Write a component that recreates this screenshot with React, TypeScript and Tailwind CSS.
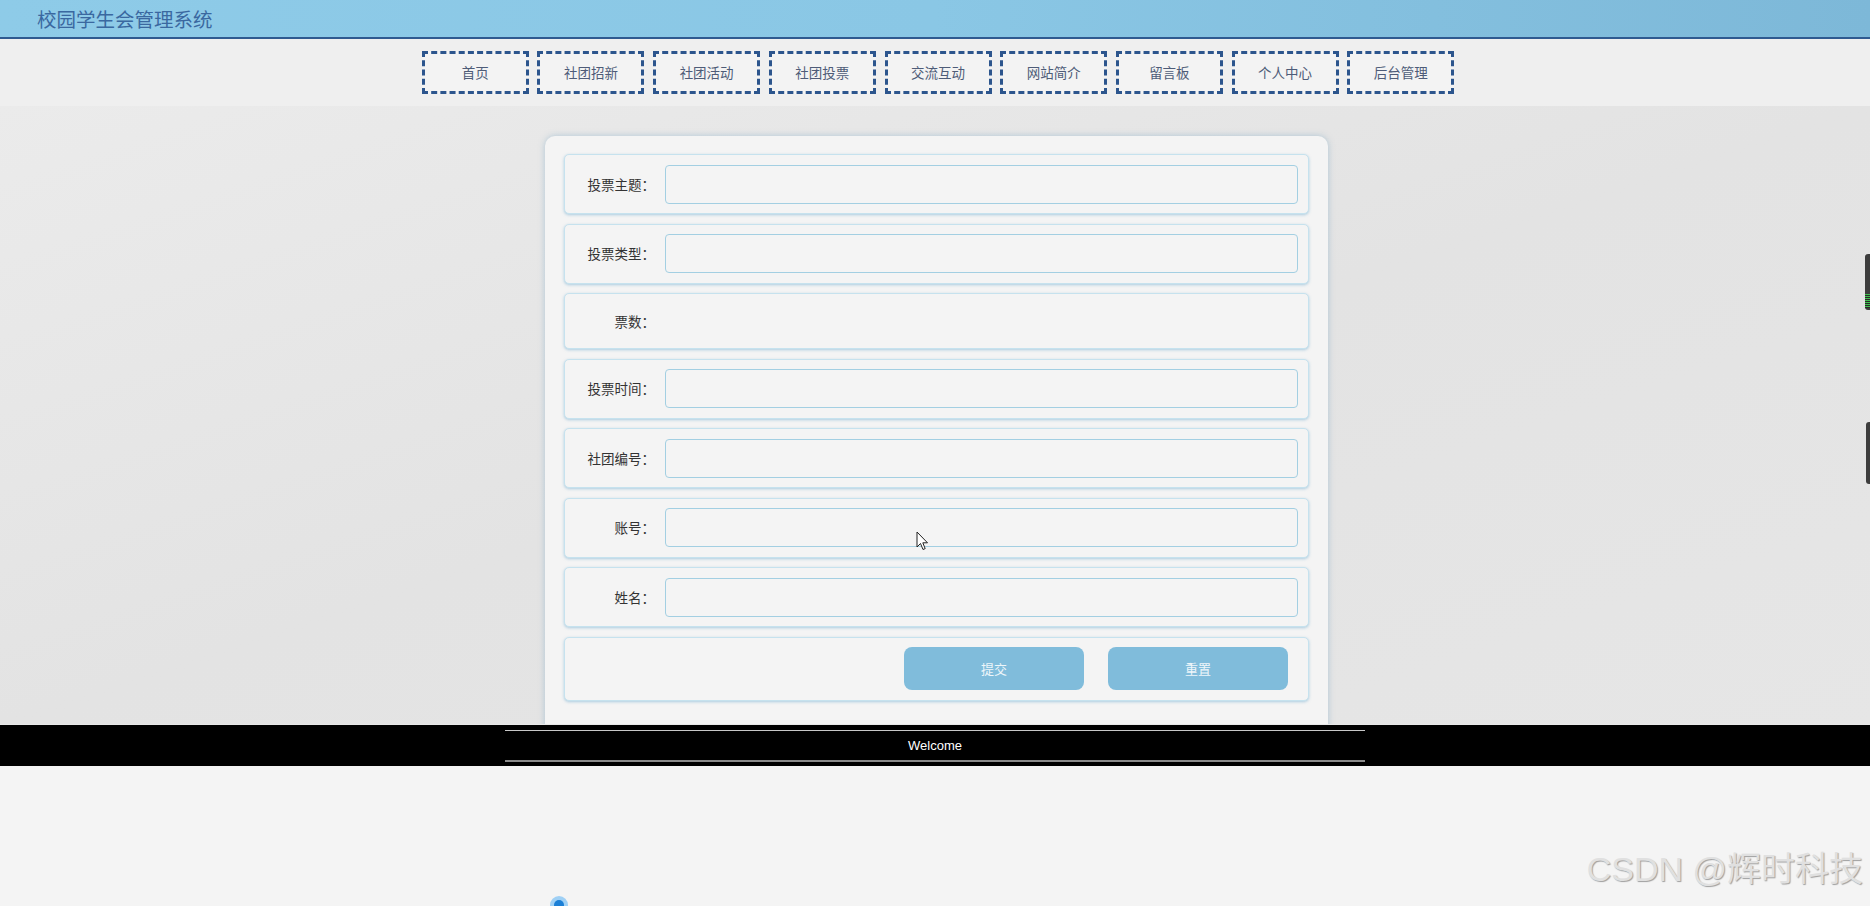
const navItems = ["首页", "社团招新", "社团活动", "社团投票", "交流互动", "网站简介", "留言板", "个人中心", "后台管理"];

type Field = { label: string; input: boolean };

const fields: Field[] = [
  { label: "投票主题：", input: true },
  { label: "投票类型：", input: true },
  { label: "票数：", input: false },
  { label: "投票时间：", input: true },
  { label: "社团编号：", input: true },
  { label: "账号：", input: true },
  { label: "姓名：", input: true },
];

const rowCls =
  "flex items-center rounded-[5px] border border-[#c6e2ee] bg-[#f4f4f4] shadow-[0_1px_3px_rgba(110,170,205,0.55)]";

function FormRow({ label, input }: Field) {
  return (
    <div className={`${rowCls} ${input ? "h-[60px]" : "h-[56px]"}`}>
      <label className="w-[90px] shrink-0 text-right text-[13.5px] text-[#333]">{label}</label>
      {input && (
        <input
          type="text"
          className="ml-[10px] mr-[10px] h-[39px] flex-1 rounded-[4px] border border-[#a3cfe2] bg-[#f4f4f4] px-2 text-[13px] outline-none"
        />
      )}
    </div>
  );
}

export default function App() {
  return (
    <div className="relative h-[906px] w-full overflow-hidden bg-[#f4f4f4] font-['Noto_Sans_CJK_SC',sans-serif]">
      {/* top title bar */}
      <div className="flex h-[39px] items-center border-b-2 border-[#2f5a90] bg-gradient-to-r from-[#8ecbe8] via-[#8ac7e5] to-[#7db8d8] pl-[37px]">
        <h1 className="text-[19.5px] leading-none text-[#3a68a0]">校园学生会管理系统</h1>
      </div>

      {/* menu */}
      <nav className="flex h-[67px] items-center justify-center gap-[8.7px] bg-[#efefef] pl-[6px]">
        {navItems.map((item) => (
          <a
            key={item}
            href="#"
            className="flex h-[43px] w-[107px] items-center justify-center border-[3px] border-dashed border-[#2c558d] bg-[#f3f3f3] text-[13.5px] text-[#4e5c78]"
          >
            {item}
          </a>
        ))}
      </nav>

      {/* form area */}
      <main className="flex h-[618px] justify-center overflow-hidden bg-gradient-to-br from-[#ebebeb] via-[#e3e3e3] to-[#e6e6e6] pl-[3px] pt-[30px]">
        <div className="h-[620px] w-[783px] rounded-t-[10px] bg-[#f4f4f4] px-[19px] pt-[18px] shadow-[0_0_6px_rgba(120,165,195,0.5)]">
          <form className="flex flex-col gap-[9.5px]">
            {fields.map((f) => (
              <FormRow key={f.label} {...f} />
            ))}
            <div className={`${rowCls} h-[64px] justify-end gap-[24px] pr-[20px]`}>
              <button
                type="button"
                className="h-[43px] w-[180px] rounded-[8px] bg-[#80bcdb] text-[13px] text-[#eef6fa]"
              >
                提交
              </button>
              <button
                type="button"
                className="h-[43px] w-[180px] rounded-[8px] bg-[#80bcdb] text-[13px] text-[#eef6fa]"
              >
                重置
              </button>
            </div>
          </form>
        </div>
      </main>

      {/* footer */}
      <footer className="h-[42px] border-t border-[#e8e8e8] bg-black pt-[5px]">
        <div className="mx-auto flex h-[32px] w-[860px] items-center justify-center border-t border-b-2 border-t-[#c8c8c8] border-b-[#8a8a8a]">
          <span className="font-['Liberation_Sans',sans-serif] text-[13px] text-white">Welcome</span>
        </div>
      </footer>

      {/* side widgets on the right edge */}
      <div className="absolute right-0 top-[254px] flex h-[56px] w-[5px] flex-col justify-end rounded-l-[3px] bg-[#3d3d3d] pb-[2px]">
        <div className="h-[14px] w-full bg-[repeating-linear-gradient(to_bottom,#3fbf4f_0,#3fbf4f_1px,#2a2a2a_1px,#2a2a2a_2px)]" />
      </div>
      <div className="absolute right-0 top-[422px] h-[62px] w-[4px] rounded-l-[3px] bg-[#3d3d3d]" />

      {/* mouse pointer */}
      <svg className="absolute left-[916px] top-[531px]" width="13" height="20" viewBox="0 0 13 20">
        <path d="M1 1 L1 16 L4.5 12.5 L7 18.5 L9.2 17.6 L6.8 11.8 L11.5 11.8 Z" fill="#fff" stroke="#222" strokeWidth="1" strokeLinejoin="round" />
      </svg>

      {/* floating dot */}
      <div className="absolute left-[550px] top-[896px] flex h-[18px] w-[18px] items-center justify-center rounded-full bg-[#9fd0f5]">
        <div className="h-[10px] w-[10px] rounded-full bg-[#1b7fd6]" />
      </div>

      {/* watermark */}
      <div className="absolute right-[7px] top-[850px] text-[34px] leading-none text-[#e0e0e0] [text-shadow:1px_1px_1px_rgba(0,0,0,0.35)]">
        <span className="font-['Liberation_Sans',sans-serif]">CSDN @</span>
        <span>辉时科技</span>
      </div>
    </div>
  );
}
